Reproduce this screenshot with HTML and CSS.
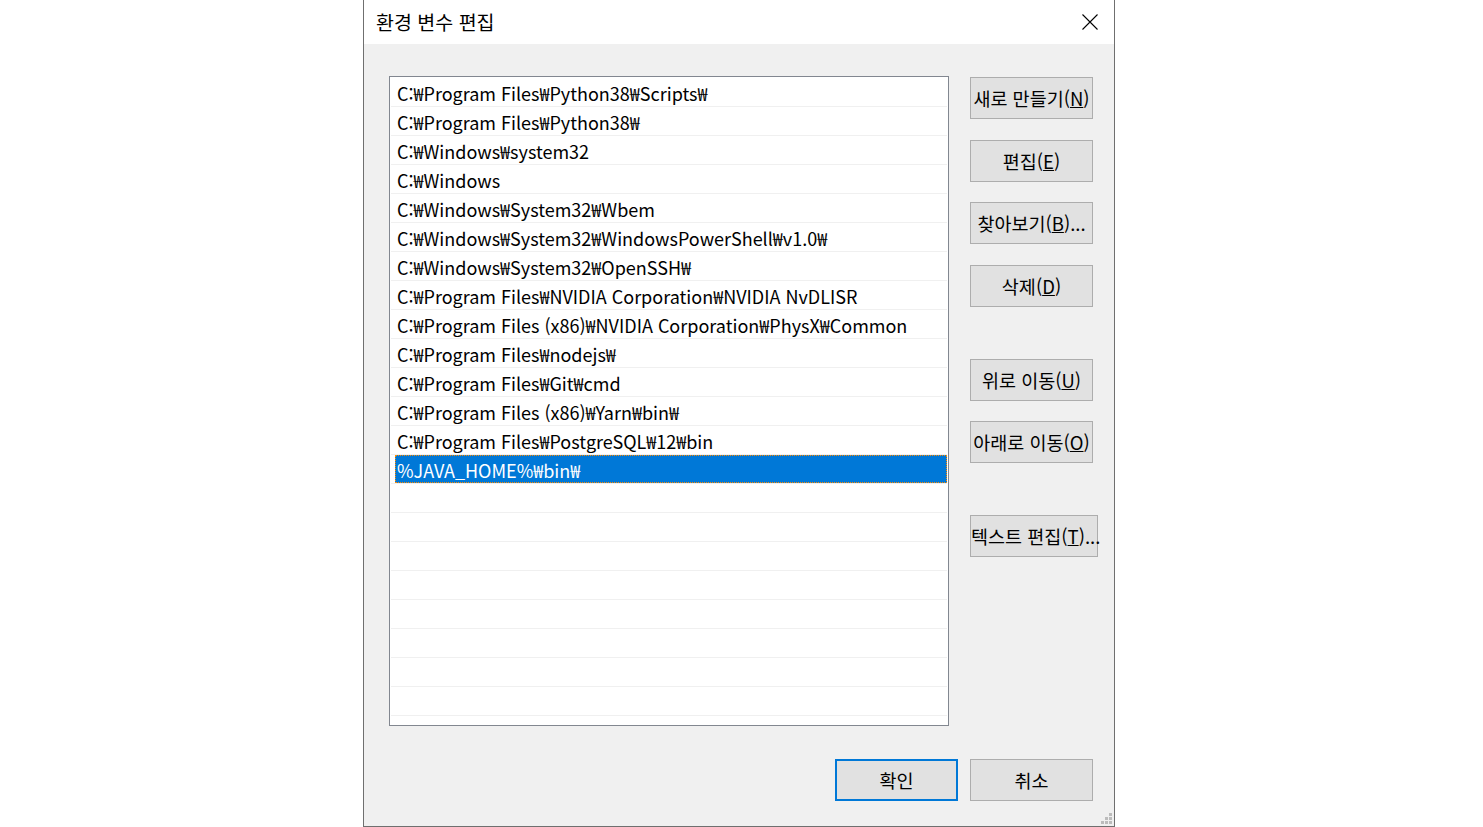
FILE: index.html
```html
<!DOCTYPE html>
<html lang="ko">
<head>
<meta charset="UTF-8">
<title>환경 변수 편집</title>
<link rel="stylesheet" href="styles.css">
</head>
<body>
<div class="dialog">
  <div class="titlebar">
    <span class="title">환경 변수 편집</span>
    <svg class="close" width="16" height="16" viewBox="0 0 16 16"><path d="M0.5 0.5 L15.5 15.5 M15.5 0.5 L0.5 15.5" stroke="#000" stroke-width="1.1" fill="none"/></svg>
  </div>
  <div class="content">
    <div class="main">
      <div class="list">
        <div class="row"><span>C:₩Program Files₩Python38₩Scripts₩</span></div>
        <div class="row"><span>C:₩Program Files₩Python38₩</span></div>
        <div class="row"><span>C:₩Windows₩system32</span></div>
        <div class="row"><span>C:₩Windows</span></div>
        <div class="row"><span>C:₩Windows₩System32₩Wbem</span></div>
        <div class="row"><span>C:₩Windows₩System32₩WindowsPowerShell₩v1.0₩</span></div>
        <div class="row"><span>C:₩Windows₩System32₩OpenSSH₩</span></div>
        <div class="row"><span>C:₩Program Files₩NVIDIA Corporation₩NVIDIA NvDLISR</span></div>
        <div class="row"><span>C:₩Program Files (x86)₩NVIDIA Corporation₩PhysX₩Common</span></div>
        <div class="row"><span>C:₩Program Files₩nodejs₩</span></div>
        <div class="row"><span>C:₩Program Files₩Git₩cmd</span></div>
        <div class="row"><span>C:₩Program Files (x86)₩Yarn₩bin₩</span></div>
        <div class="row"><span>C:₩Program Files₩PostgreSQL₩12₩bin</span></div>
        <div class="row selected"><span>%JAVA_HOME%₩bin₩</span></div>
        <div class="row"></div>
        <div class="row"></div>
        <div class="row"></div>
        <div class="row"></div>
        <div class="row"></div>
        <div class="row"></div>
        <div class="row"></div>
        <div class="row"></div>
      </div>
      <div class="side">
        <button class="btn b-new">새로 만들기(<u>N</u>)</button>
        <button class="btn b-edit">편집(<u>E</u>)</button>
        <button class="btn b-browse">찾아보기(<u>B</u>)...</button>
        <button class="btn b-del">삭제(<u>D</u>)</button>
        <button class="btn b-up">위로 이동(<u>U</u>)</button>
        <button class="btn b-down">아래로 이동(<u>O</u>)</button>
        <button class="btn b-text">텍스트 편집(<u>T</u>)...</button>
      </div>
    </div>
    <div class="footer">
      <button class="btn ok">확인</button>
      <button class="btn">취소</button>
    </div>
  </div>
  <svg class="grip" width="12" height="12" viewBox="0 0 12 12">
    <rect x="8" y="0" width="3" height="3" fill="#bcbcbc"/>
    <rect x="4" y="4" width="3" height="3" fill="#bcbcbc"/>
    <rect x="8" y="4" width="3" height="3" fill="#bcbcbc"/>
    <rect x="0" y="8" width="3" height="3" fill="#bcbcbc"/>
    <rect x="4" y="8" width="3" height="3" fill="#bcbcbc"/>
    <rect x="8" y="8" width="3" height="3" fill="#bcbcbc"/>
  </svg>
</div>
</body>
</html>
```

FILE: styles.css
```css
/* Page */
body {
    margin: 0;
    background-color: #fff;
    font-family: "Noto Sans CJK KR", "Noto Sans", sans-serif;
    font-size: 18px;
    color: #000;
}

/* Dialog window */
.dialog {
    position: relative;
    box-sizing: border-box;
    width: 752px;
    height: 827px;
    margin-left: 363px;
    border: 1px solid #6f6f6f;
    border-top: none;
    background-color: #f0f0f0;
}

.titlebar {
    display: flex;
    align-items: center;
    justify-content: space-between;
    height: 44px;
    padding: 0 16px 0 12px;
    background-color: #fff;
}

.title {
    font-size: 19.5px;
    margin-top: -1px;
}

.close {
    margin-top: -1px;
}

.content {
    padding: 32px 0 0 25px;
}

.main {
    display: flex;
    gap: 21px;
}

/* Path list */
.list {
    box-sizing: border-box;
    width: 560px;
    height: 650px;
    padding: 1px 1px 0 1px;
    border: 1px solid #828790;
    background-color: #fff;
}

.row {
    box-sizing: border-box;
    height: 29px;
    border-bottom: 1px solid #f0f0f0;
    padding-left: 4px;
    display: flex;
}

.row span {
    display: flex;
    align-items: center;
    padding: 2px 0 0 2px;
    line-height: 26px;
    white-space: nowrap;
}

.row.selected span {
    flex: 1;
    background-color: #0078d7;
    color: #fff;
    outline: 1px dotted #ff8c00;
    outline-offset: -1px;
}

/* Buttons */
.side {
    display: flex;
    flex-direction: column;
    align-items: flex-start;
    padding-top: 1px;
}

.btn {
    box-sizing: border-box;
    width: 123px;
    height: 42px;
    padding: 0;
    border: 1px solid #adadad;
    background-color: #e1e1e1;
    font-family: inherit;
    font-size: 18.5px;
    color: #000;
    white-space: nowrap;
}

.b-edit { margin-top: 21px; }
.b-browse { margin-top: 20px; }
.b-del { margin-top: 21px; }
.b-up { margin-top: 52px; }
.b-down { margin-top: 20px; }
.b-text { margin-top: 52px; width: 128px; }

.footer {
    display: flex;
    justify-content: flex-end;
    gap: 12px;
    padding: 33px 21px 0 0;
}

.btn.ok {
    border: 2px solid #0078d7;
}

.grip {
    position: absolute;
    right: 1px;
    bottom: 1px;
}
```
